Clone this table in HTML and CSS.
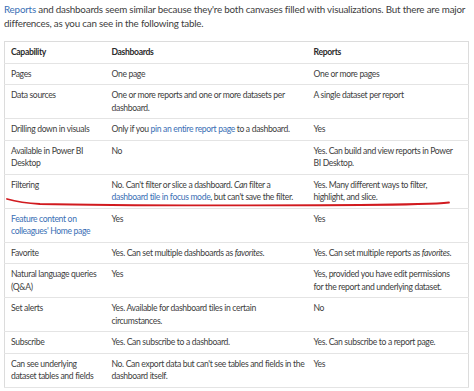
FILE: index.html
```html
<!DOCTYPE html>
<html lang="en">
<head>
    <meta charset="UTF-8">
    <title>Reports vs dashboards</title>
    <link rel="stylesheet" href="styles.css">
</head>
<body>
    <div class="page">
        <p class="intro"><a href="#">Reports</a> and dashboards seem similar because they're both canvases filled with visualizations. But there are major differences, as you can see in the following table.</p>

        <div class="table-wrap">
            <table class="compare">
                <colgroup>
                    <col class="col-cap">
                    <col class="col-dash">
                    <col class="col-rep">
                </colgroup>
                <thead>
                    <tr>
                        <th>Capability</th>
                        <th>Dashboards</th>
                        <th>Reports</th>
                    </tr>
                </thead>
                <tbody>
                    <tr>
                        <td>Pages</td>
                        <td>One page</td>
                        <td>One or more pages</td>
                    </tr>
                    <tr>
                        <td>Data sources</td>
                        <td>One or more reports and one or more datasets per dashboard.</td>
                        <td>A single dataset per report</td>
                    </tr>
                    <tr>
                        <td>Drilling down in visuals</td>
                        <td>Only if you <a href="#">pin an entire report page</a> to a dashboard.</td>
                        <td>Yes</td>
                    </tr>
                    <tr>
                        <td>Available in Power BI Desktop</td>
                        <td>No</td>
                        <td>Yes. Can build and view reports in Power BI Desktop.</td>
                    </tr>
                    <tr>
                        <td>Filtering</td>
                        <td>No. Can't filter or slice a dashboard. <em>Can</em> filter a <a href="#">dashboard tile in focus mode</a>, but can't save the filter.</td>
                        <td>Yes. Many different ways to filter, highlight, and slice.</td>
                    </tr>
                    <tr>
                        <td><a href="#">Feature content on colleagues' Home page</a></td>
                        <td>Yes</td>
                        <td>Yes</td>
                    </tr>
                    <tr>
                        <td>Favorite</td>
                        <td>Yes. Can set multiple dashboards as <em>favorites</em>.</td>
                        <td>Yes. Can set multiple reports as <em>favorites</em>.</td>
                    </tr>
                    <tr>
                        <td>Natural language queries (Q&amp;A)</td>
                        <td>Yes</td>
                        <td>Yes, provided you have edit permissions for the report and underlying dataset.</td>
                    </tr>
                    <tr>
                        <td>Set alerts</td>
                        <td>Yes. Available for dashboard tiles in certain circumstances.</td>
                        <td>No</td>
                    </tr>
                    <tr>
                        <td>Subscribe</td>
                        <td>Yes. Can subscribe to a dashboard.</td>
                        <td>Yes. Can subscribe to a report page.</td>
                    </tr>
                    <tr>
                        <td>Can see underlying dataset tables and fields</td>
                        <td>No. Can export data but can't see tables and fields in the dashboard itself.</td>
                        <td>Yes</td>
                    </tr>
                </tbody>
            </table>

            <!-- hand-drawn highlight under the Filtering row -->
            <svg class="scribble" width="474" height="16" viewBox="0 0 474 16">
                <path d="M7 2 C 14 4, 22 6, 40 7 C 120 9, 260 8.5, 360 8 C 410 7.6, 440 6.5, 449 5.5" />
            </svg>
        </div>
    </div>
</body>
</html>
```

FILE: styles.css
```css
* {
    margin: 0;
    padding: 0;
    box-sizing: border-box;
}
body {
    font-family: "Segoe UI", Lato, sans-serif;
    background: #ffffff;
    color: #404040;
}
a {
    color: #3a6fb5;
    text-decoration: none;
}
.page {
    padding: 3px 6px 0 4px;
}
.intro {
    font-size: 9.8px;
    letter-spacing: -0.2px;
    line-height: 13.5px;
    margin-bottom: 11px;
}
.table-wrap {
    position: relative;
}
.compare {
    width: 464px;
    border-collapse: collapse;
    table-layout: fixed;
    border: 1px solid #dcdcdc;
    font-size: 8.6px;
    letter-spacing: -0.34px;
    line-height: 12.5px;
}
.col-cap {
    width: 101px;
}
.col-dash {
    width: 202px;
}
.col-rep {
    width: 161px;
}
.compare th,
.compare td {
    text-align: left;
    vertical-align: top;
    padding: 4px 2px 4px 6px;
    border-bottom: 1px solid #e4e4e4;
}
.compare td:last-child {
    padding-right: 9px;
}
.compare th {
    font-weight: 700;
    color: #2b2b2b;
}
.compare em {
    font-style: italic;
}
.scribble {
    position: absolute;
    left: -4px;
    top: 156px;
    overflow: visible;
}
.scribble path {
    fill: none;
    stroke: #d11a1f;
    stroke-width: 1.8;
    stroke-linecap: round;
}
```
